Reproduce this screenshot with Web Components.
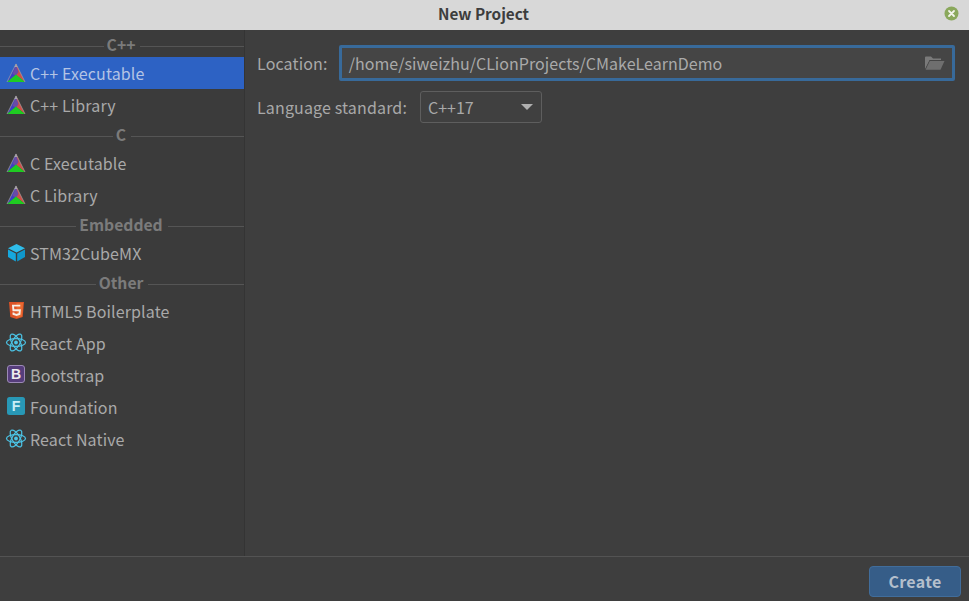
<!DOCTYPE html>
<html><head><meta charset="utf-8">
<style>
html,body{margin:0;padding:0;height:100%;overflow:hidden;background:#3e3e3e}
body{font-family:"Noto Sans CJK SC","Noto Sans",sans-serif;font-size:16px;color:#bbb}
</style></head><body>
<new-project></new-project>
<template id="ic-cmake"><svg width="22" height="22" viewBox="0 0 22 22"><polygon points="11,2 2,20 11,13" fill="#3b3fc4"/><polygon points="11,2 20,20 11,13" fill="#cf4f48"/><polygon points="11,3 7.5,12 11,13.5 13.5,10" fill="#6a4aa6"/><polygon points="11,12.5 2,20 20,20" fill="#1fcb22"/><polygon points="11,1.5 9.5,5 12.5,5" fill="#a8a8b0"/><path d="M11 2 2 20M11 2 20 20" stroke="#a9a2a2" stroke-width=".7" fill="none"/></svg></template>
<template id="ic-cube"><svg width="22" height="22" viewBox="0 0 22 22"><polygon points="11.5,2 20,6.3 11.5,10.6 3,6.3" fill="#2fbdea"/><polygon points="3,7.4 10.8,11.6 10.8,19.4 3,15" fill="#16a8de"/><polygon points="20,7.4 12.2,11.6 12.2,19.4 20,15" fill="#0f97cb"/></svg></template>
<template id="ic-html"><svg width="22" height="22" viewBox="0 0 22 22"><polygon points="4,2 19,2 17.7,17 11.5,19 5.3,17" fill="#dd5327"/><polygon points="11.5,3 18,3 16.9,16.3 11.5,18" fill="#ea6a30"/><path d="M15.3 5.6H8l.4 4.6h6.5l-.4 3.8-3 1-3-1-.1-1.5" fill="none" stroke="#f7efe8" stroke-width="1.9"/></svg></template>
<template id="ic-react"><svg width="22" height="22" viewBox="0 0 22 22"><g fill="none" stroke="#4cc4e6" stroke-width="1.25" transform="translate(0 -.5)"><ellipse cx="11" cy="11" rx="9.5" ry="3.9"/><ellipse cx="11" cy="11" rx="9.5" ry="3.9" transform="rotate(60 11 11)"/><ellipse cx="11" cy="11" rx="9.5" ry="3.9" transform="rotate(120 11 11)"/></g><circle cx="11" cy="10.5" r="1.9" fill="#4cc4e6"/></svg></template>
<template id="ic-boot"><svg width="22" height="22" viewBox="0 0 22 22"><rect x="2.5" y="1.5" width="17" height="17" rx="2.5" fill="#563d7c" stroke="#9c8ab6" stroke-width="1"/><text x="11.1" y="15" text-anchor="middle" font-family="Liberation Sans" font-weight="700" font-size="14" fill="#eee">B</text></svg></template>
<template id="ic-found"><svg width="22" height="22" viewBox="0 0 22 22"><rect x="2" y="1" width="18" height="18" rx="2.5" fill="#2898b6"/><text x="11" y="15" text-anchor="middle" font-family="Liberation Sans" font-weight="700" font-size="14" fill="#c9eef6">F</text></svg></template>
<script>
class GroupHeader extends HTMLElement{
  constructor(){super();this.attachShadow({mode:'open'}).innerHTML=`<style>
  :host{display:flex;align-items:center;height:26px;gap:4px;color:#7b7b7b;font-weight:700;font-size:15.7px}
  i{flex:1;height:1px;background:#555;margin-top:4px}
  span{margin:0 1px 0 -1px;height:26px;line-height:28px}
  </style><i></i><span><slot></slot></span><i></i>`;}
}
class ProjectItem extends HTMLElement{
  constructor(){super();const t=document.getElementById('ic-'+this.getAttribute('icon'));
    const s=this.attachShadow({mode:'open'});
    s.innerHTML=`<style>
    :host{display:flex;align-items:center;height:32px;padding-left:5px;gap:3px;color:#a9a9a9;line-height:32px;letter-spacing:.12px}
    :host([selected]){background:#2d62c4;color:#b4c4e4}
    svg{display:block;flex:none}
    .i{width:22px;height:22px;flex:none}
    </style><span class="i"></span><slot></slot>`;
    s.querySelector('.i').appendChild(t.content.cloneNode(true));
  }
}
class SideBar extends HTMLElement{
  constructor(){super();this.attachShadow({mode:'open'}).innerHTML=`<style>
  :host{display:block;width:244px;flex:none;padding-top:1px;background:#3b3b3b;border-right:1px solid #343434;box-sizing:content-box}
  </style><slot></slot>`;}
}
class TitleBar extends HTMLElement{
  constructor(){super();this.attachShadow({mode:'open'}).innerHTML=`<style>
  :host{display:flex;align-items:center;justify-content:center;box-sizing:border-box;height:30px;padding:0 2px 4px 0;background:#d8d8d8;color:#3d3d3d;font-weight:700;font-size:15.3px;position:relative}
  svg{position:absolute;right:10px;top:5.5px}
  </style><slot></slot><svg width="15" height="15" viewBox="0 0 15 15"><circle cx="7.5" cy="7.5" r="7" fill="#8aa85c"/><path d="M5 5l5 5M10 5l-5 5" stroke="#f2f4ea" stroke-width="1.8" stroke-linecap="round"/></svg>`;}
}
class FieldRow extends HTMLElement{
  constructor(){super();this.attachShadow({mode:'open'}).innerHTML=`<style>
  :host{display:flex;align-items:center;gap:11px;color:#a9a9a9;letter-spacing:.15px}
  </style><slot name="label"></slot><slot></slot>`;}
}
class PathInput extends HTMLElement{
  constructor(){super();this.attachShadow({mode:'open'}).innerHTML=`<style>
  :host{display:flex;align-items:center;justify-content:space-between;box-sizing:border-box;width:616px;height:36px;border:3px solid #386a9a;background:#454545;padding:0 7px;color:#aaa;border-radius:2px;letter-spacing:.04px}
  svg{display:block}
  </style><slot></slot><svg width="21" height="16" viewBox="0 0 21 16"><path d="M1 14V2.5Q1 1.5 2 1.5H7L9 3.5H17V5H5.5L1 14Z" fill="#7a7a7a"/><path d="M5.8 6H20.5L16.5 14.8H1.6Z" fill="#6f6f6f"/></svg>`;}
}
class SelectBox extends HTMLElement{
  constructor(){super();this.attachShadow({mode:'open'}).innerHTML=`<style>
  :host{display:flex;align-items:center;justify-content:space-between;box-sizing:border-box;width:122px;height:32px;margin-left:2px;border:1px solid #5e5e5e;border-radius:3px;padding:0 8px 0 7px;color:#a9a9a9;background:#404040;letter-spacing:0}
  i{width:0;height:0;border:6px solid transparent;border-top:6px solid #b0b0b0;border-bottom:0}
  </style><slot></slot><i></i>`;}
}
class PrimaryButton extends HTMLElement{
  constructor(){super();this.attachShadow({mode:'open'}).innerHTML=`<style>
  :host{display:flex;align-items:center;justify-content:center;box-sizing:border-box;width:92px;height:31px;padding-bottom:2px;background:#365d88;border:1px solid #416d9b;border-radius:4px;color:#b4bfcc;font-weight:700;font-size:16px;letter-spacing:.3px}
  </style><slot></slot>`;}
}
class NewProject extends HTMLElement{
  constructor(){super();this.attachShadow({mode:'open'}).innerHTML=`<style>
  :host{display:flex;flex-direction:column;height:601px;width:969px}
  .main{flex:1;display:flex;min-height:0}
  .panel{flex:1;display:flex;flex-direction:column;gap:10px;padding:15px 15px 0 12px;background:#3e3e3e}
  .foot{height:45px;flex:none;box-sizing:border-box;border-top:1px solid #535353;background:#3e3e3e;display:flex;justify-content:flex-end;align-items:flex-start;padding:9px 8px 0 0}
  span{display:block}
  </style>
  <title-bar>New Project</title-bar>
  <div class="main">
    <side-bar>
      <group-header>C++</group-header>
      <project-item icon="cmake" selected>C++ Executable</project-item>
      <project-item icon="cmake">C++ Library</project-item>
      <group-header>C</group-header>
      <project-item icon="cmake">C Executable</project-item>
      <project-item icon="cmake">C Library</project-item>
      <group-header>Embedded</group-header>
      <project-item icon="cube">STM32CubeMX</project-item>
      <group-header>Other</group-header>
      <project-item icon="html">HTML5 Boilerplate</project-item>
      <project-item icon="react">React App</project-item>
      <project-item icon="boot">Bootstrap</project-item>
      <project-item icon="found">Foundation</project-item>
      <project-item icon="react">React Native</project-item>
    </side-bar>
    <div class="panel">
      <field-row><span slot="label">Location:</span><path-input>/home/siweizhu/CLionProjects/CMakeLearnDemo</path-input></field-row>
      <field-row><span slot="label">Language standard:</span><select-box>C++17</select-box></field-row>
    </div>
  </div>
  <div class="foot"><primary-button>Create</primary-button></div>`;}
}
[['group-header',GroupHeader],['project-item',ProjectItem],['side-bar',SideBar],['title-bar',TitleBar],['field-row',FieldRow],['path-input',PathInput],['select-box',SelectBox],['primary-button',PrimaryButton],['new-project',NewProject]].forEach(([n,c])=>customElements.define(n,c));
</script>
</body></html>
